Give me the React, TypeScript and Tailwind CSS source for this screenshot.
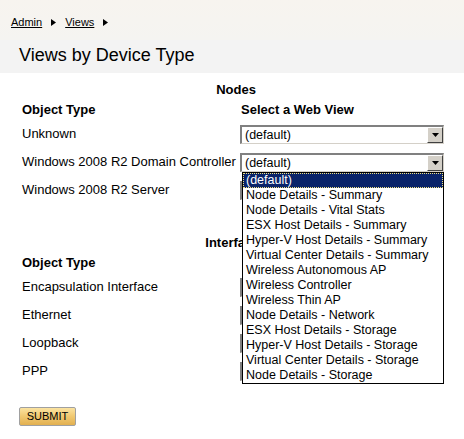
import React from "react";

const nodeOptions = [
  "(default)",
  "Node Details - Summary",
  "Node Details - Vital Stats",
  "ESX Host Details - Summary",
  "Hyper-V Host Details - Summary",
  "Virtual Center Details - Summary",
  "Wireless Autonomous AP",
  "Wireless Controller",
  "Wireless Thin AP",
  "Node Details - Network",
  "ESX Host Details - Storage",
  "Hyper-V Host Details - Storage",
  "Virtual Center Details - Storage",
  "Node Details - Storage",
];

function Arrow() {
  return (
    <svg width="5" height="7" viewBox="0 0 5 7" className="mx-[9px]">
      <path d="M0 0 L5 3.5 L0 7 Z" fill="#000" />
    </svg>
  );
}

function Select({ open = false }: { open?: boolean }) {
  return (
    <div className="relative w-[204px] h-[19px] shrink-0">
      <div className="flex h-full border-t-2 border-l-2 border-t-[#808080] border-l-[#808080] border-b border-r border-b-[#d4d0c8] border-r-[#d4d0c8] bg-white">
        <div className="flex-1 pl-[3px] text-[12.5px] leading-[16px] text-black">(default)</div>
        <div className="w-[16px] h-full bg-[#d4d0c8] border-t border-l border-t-white border-l-white border-b border-r border-b-[#404040] border-r-[#404040] flex items-center justify-center">
          <svg width="7" height="4" viewBox="0 0 7 4">
            <path d="M0 0 H7 L3.5 4 Z" fill="#000" />
          </svg>
        </div>
      </div>
      {open && (
        <div className="absolute top-full left-[2px] w-[202px] border border-black bg-white z-10">
          {nodeOptions.map((o, i) => (
            <div
              key={o}
              className={
                i === 0
                  ? "h-[15px] leading-[13px] pl-[2px] text-[12.5px] text-white bg-[#0a246a] border border-dotted border-[#f0e080] whitespace-nowrap"
                  : "h-[15px] leading-[15px] pl-[3px] text-[12.5px] text-black whitespace-nowrap"
              }
            >
              {o}
            </div>
          ))}
        </div>
      )}
    </div>
  );
}

function Row({ label, select, open }: { label: string; select?: boolean; open?: boolean }) {
  return (
    <div className="flex h-[28px] items-center">
      <div className="w-[240px] shrink-0 pl-[22px] text-[13px] text-black whitespace-nowrap">{label}</div>
      {select && <Select open={open} />}
    </div>
  );
}

export default function App() {
  return (
    <div className="w-[464px] h-[439px] bg-white overflow-hidden" style={{ fontFamily: '"Liberation Sans", Arial, sans-serif' }}>
      <div className="h-[40px] bg-gradient-to-b from-[#f7f4ef] to-[#f5f4f1] pt-[15px] pl-[11px] flex items-start text-[11px] leading-[14px] text-black">
        <span className="underline">Admin</span>
        <span className="pt-[4px]"><Arrow /></span>
        <span className="underline">Views</span>
        <span className="pt-[4px]"><Arrow /></span>
      </div>
      <div className="h-[33px] bg-[#f3f3f3] pl-[19px] pt-[5px] text-[18px] leading-[21px] text-black">Views by Device Type</div>

      <div className="pt-[8px]">
        <div className="h-[18px] text-center text-[13px] font-bold leading-[18px] w-[472px]">Nodes</div>
        <div className="flex h-[21px] items-center text-[13px] font-bold">
          <div className="w-[240px] shrink-0 pl-[22px]">Object Type</div>
          <div className="pl-[1px]">Select a Web View</div>
        </div>
        <Row label="Unknown" select />
        <div className="relative z-10">
          <Row label="Windows 2008 R2 Domain Controller" select open />
        </div>
        <Row label="Windows 2008 R2 Server" select />

        <div className="mt-[30px] h-[18px] text-center text-[13px] font-bold leading-[18px] w-[472px]">Interfaces</div>
        <div className="flex h-[21px] items-center text-[13px] font-bold">
          <div className="w-[240px] shrink-0 pl-[22px]">Object Type</div>
        </div>
        <Row label="Encapsulation Interface" select />
        <Row label="Ethernet" select />
        <Row label="Loopback" select />
        <Row label="PPP" select />

        <div className="mt-[18px] pl-[19px]">
          <button className="w-[57px] h-[19px] rounded-[2px] border border-[#a0a0a0] bg-gradient-to-b from-[#fbe3a0] via-[#f0c870] to-[#e2b050] text-[11px] leading-[16px] text-black">
            SUBMIT
          </button>
        </div>
      </div>
    </div>
  );
}
